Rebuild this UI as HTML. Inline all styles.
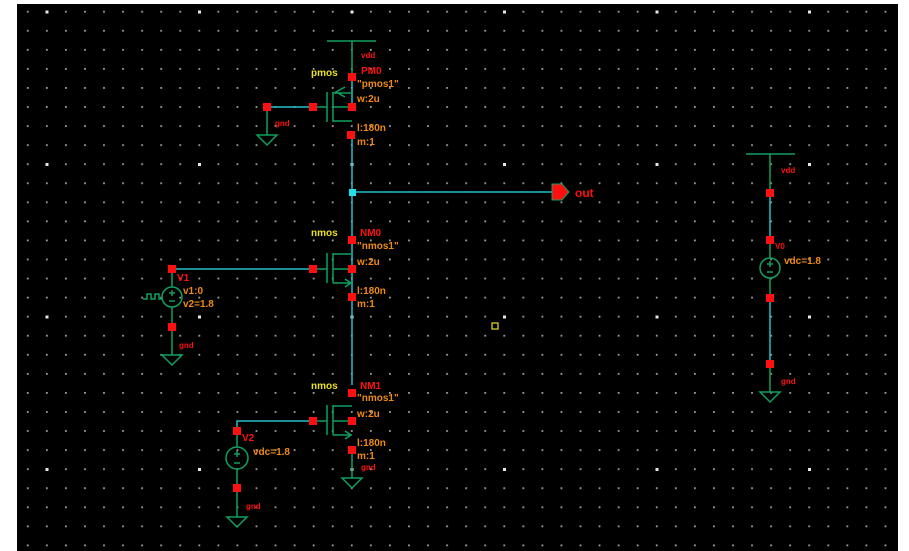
<!DOCTYPE html>
<html><head><meta charset="utf-8"><style>
html,body{margin:0;padding:0;background:#fff;width:909px;height:551px;overflow:hidden}
svg{position:absolute;left:0;top:0}
text{font-family:"Liberation Sans",sans-serif;font-size:10px;font-weight:bold}
.r{fill:#ff1010}.o{fill:#f08a10}.y{fill:#e8e020}
.g{stroke:#10a060;stroke-width:1.5;fill:none}
.c{stroke:#20c0c8;stroke-width:1.5;fill:none}
.p{fill:#ff1010}
</style></head><body>
<svg width="909" height="551" viewBox="0 0 909 551">
<defs>
<pattern id="d" x="-0.5" y="2.5" width="19.06" height="19.06" patternUnits="userSpaceOnUse">
<rect x="8.3" y="8.3" width="1.8" height="1.8" fill="#a0a0a0"/>
</pattern>
<pattern id="D" x="-0.5" y="2.5" width="152.5" height="152.5" patternUnits="userSpaceOnUse">
<rect x="46" y="8" width="3" height="3" fill="#e8e8e8"/>
</pattern>
</defs>
<rect x="17" y="4" width="881" height="547" fill="#000"/>
<rect x="17" y="4" width="881" height="547" fill="url(#d)"/>
<rect x="17" y="4" width="881" height="547" fill="url(#D)"/>

<!-- PMOS -->
<path class="g" d="M327 41H376M352 41V77"/>
<path class="c" d="M352 77V106M352 135V385M352 192H552M267 107H313"/>
<path class="g" d="M313 107H327M327 92V122M333 92V122M333 93H352M333 121H352M333 107H352M345 87L336 92L345 97M267 107V135"/>
<path class="g" d="M257 135H277L267 145Z"/>
<rect x="349" y="189" width="7" height="7" fill="#20e0e8"/>
<path d="M552 184H562L569 192L562 200H552Z" fill="#ff1010" stroke="#10a060" stroke-width="1"/>
<text x="575" y="197" class="r" style="font-size:12px">out</text>
<text x="311" y="76" class="y">pmos</text>
<text x="361" y="58" class="r" style="font-size:8px">vdd</text>
<text x="361" y="74" class="r">PM0</text>
<text x="357" y="87" class="o">"pmos1"</text>
<text x="357" y="102" class="o">w:2u</text>
<text x="357" y="131" class="o">l:180n</text>
<text x="357" y="145" class="o">m:1</text>
<text x="275" y="126" class="r" style="font-size:8px">gnd</text>

<!-- NM0 -->
<path class="c" d="M172 269H313"/>
<path class="g" d="M313 269H327M327 253V283M333 253V283M333 254H352M333 283H352M333 269H352M345 279L351 283L345 287M172 269V287M172 307V355"/>
<circle cx="172" cy="297" r="10" class="g"/>
<path class="g" d="M172 290V296M169 293H175M169 301H175M143 299H147V294H151V299H155V294H159V299H162"/>
<path class="g" d="M162 355H182L172 365Z"/>
<text x="311" y="236" class="y">nmos</text>
<text x="360" y="236" class="r">NM0</text>
<text x="357" y="249" class="o">"nmos1"</text>
<text x="357" y="265" class="o">w:2u</text>
<text x="357" y="294" class="o">l:180n</text>
<text x="357" y="307" class="o">m:1</text>
<text x="177" y="281" class="r">V1</text>
<text x="183" y="294" class="o">v1:0</text>
<text x="183" y="307" class="o">v2=1.8</text>
<text x="179" y="348" class="r" style="font-size:8px">gnd</text>

<!-- NM1 -->
<path class="c" d="M313 421H237V431"/>
<path class="g" d="M313 421H327M327 405V435M333 405V435M333 406H352M333 435H352M333 421H352M345 431L351 435L345 439M352 450V478M237 431V447M237 469V517"/>
<circle cx="237" cy="458" r="11" class="g"/>
<path class="g" d="M237 451V457M234 454H240M234 463H240"/>
<path class="g" d="M342 478H362L352 488Z"/>
<path class="g" d="M227 517H247L237 527Z"/>
<text x="311" y="389" class="y">nmos</text>
<text x="360" y="389" class="r">NM1</text>
<text x="357" y="401" class="o">"nmos1"</text>
<text x="357" y="417" class="o">w:2u</text>
<text x="357" y="446" class="o">l:180n</text>
<text x="357" y="459" class="o">m:1</text>
<text x="361" y="470" class="r" style="font-size:8px">gnd</text>
<text x="242" y="441" class="r">V2</text>
<text x="253" y="455" class="o">vdc=1.8</text>
<text x="246" y="509" class="r" style="font-size:8px">gnd</text>

<!-- V0 -->
<path class="g" d="M746 154H795M770 154V193M770 240V258M770 278V298M770 364V392"/>
<path class="c" d="M770 193V240M770 298V364"/>
<circle cx="770" cy="268" r="10" class="g"/>
<path class="g" d="M770 261V267M767 264H773M767 272H773"/>
<path class="g" d="M760 392H780L770 402Z"/>
<text x="781" y="173" class="r" style="font-size:8px">vdd</text>
<text x="775" y="249" class="r" style="font-size:8px">V0</text>
<text x="784" y="264" class="o">vdc=1.8</text>
<text x="781" y="384" class="r" style="font-size:8px">gnd</text>

<rect x="492" y="323" width="6" height="6" fill="none" stroke="#e8e020" stroke-width="1.2"/>

<g class="p">
<rect x="348" y="73" width="8" height="8"/><rect x="348" y="103" width="8" height="8"/><rect x="347" y="131" width="8" height="8"/>
<rect x="263" y="103" width="8" height="8"/><rect x="309" y="103" width="8" height="8"/>
<rect x="348" y="236" width="8" height="8"/><rect x="348" y="265" width="8" height="8"/><rect x="348" y="293" width="8" height="8"/>
<rect x="168" y="265" width="8" height="8"/><rect x="309" y="265" width="8" height="8"/><rect x="168" y="323" width="8" height="8"/>
<rect x="348" y="389" width="8" height="8"/><rect x="348" y="417" width="8" height="8"/><rect x="348" y="446" width="8" height="8"/>
<rect x="309" y="417" width="8" height="8"/><rect x="233" y="427" width="8" height="8"/><rect x="233" y="484" width="8" height="8"/>
<rect x="766" y="189" width="8" height="8"/><rect x="766" y="236" width="8" height="8"/><rect x="766" y="294" width="8" height="8"/><rect x="766" y="360" width="8" height="8"/>
</g>
</svg>
</body></html>
